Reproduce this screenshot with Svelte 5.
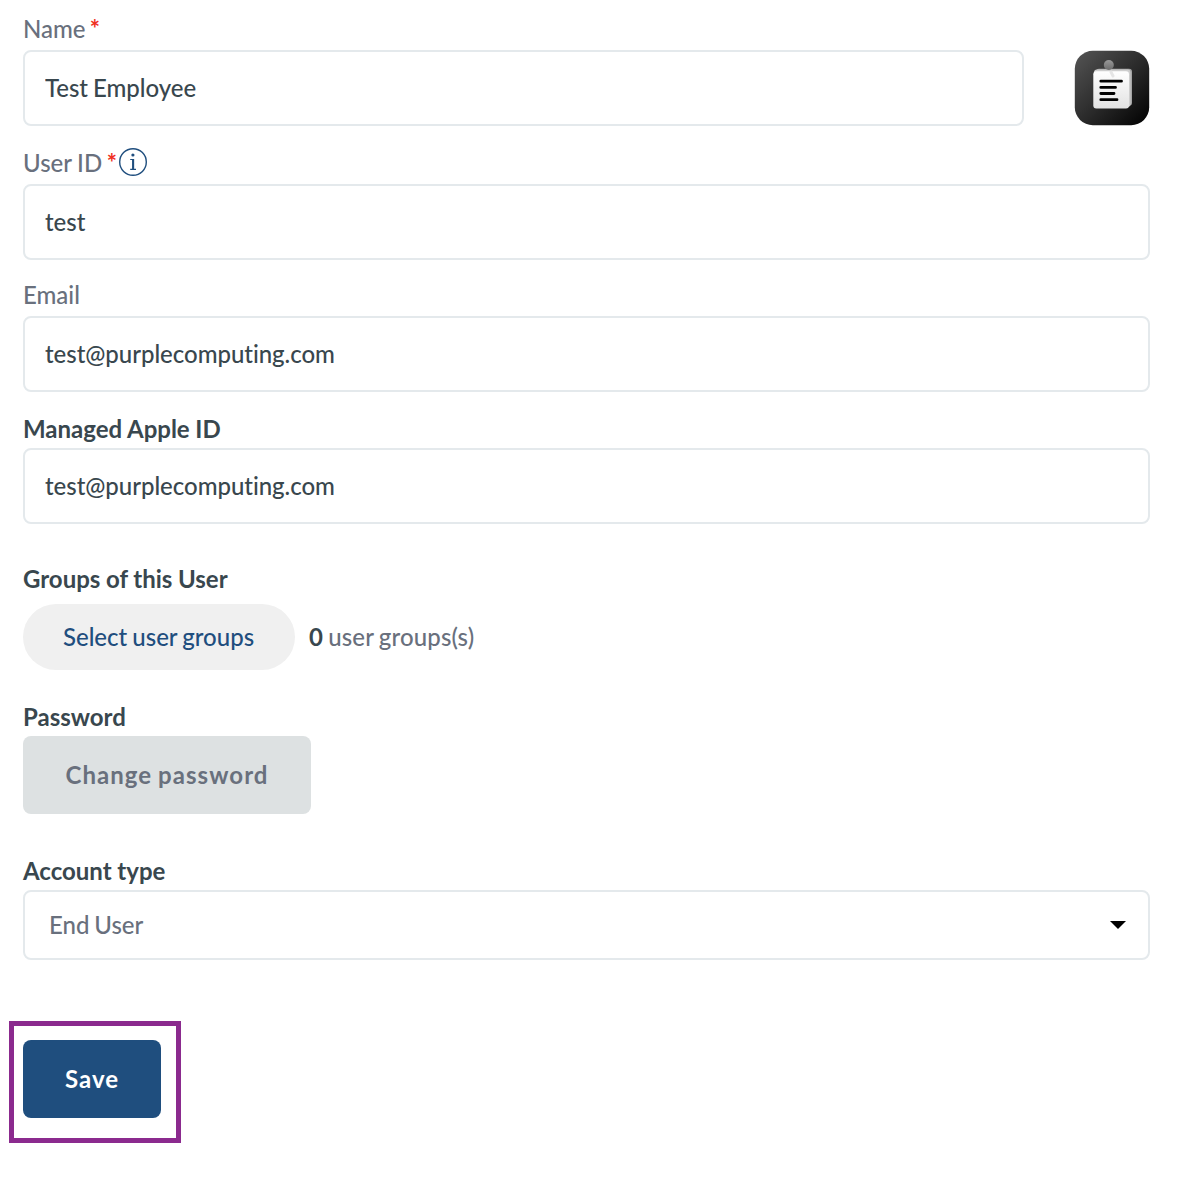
<script lang="ts">
	let name = 'Test Employee';
	let userId = 'test';
	let email = 'test@purplecomputing.com';
	let appleId = 'test@purplecomputing.com';
	let groupCount = 0;
	let accountType = 'End User';
</script>

<svelte:head>
	<title>Edit user</title>
</svelte:head>

<form class="user-form" on:submit|preventDefault>
	<div class="name-row">
		<div class="field">
			<label for="name">Name <span class="required">*</span></label>
			<input id="name" type="text" spellcheck="false" bind:value={name} />
		</div>
		<svg class="app-icon" width="76" height="76" viewBox="0 0 76 76">
			<defs>
				<linearGradient id="tile" x1="0" y1="0" x2="1" y2="1">
					<stop offset="0" stop-color="#555" />
					<stop offset="0.5" stop-color="#2c2c2c" />
					<stop offset="1" stop-color="#000" />
				</linearGradient>
				<linearGradient id="paper" x1="0" y1="0" x2="0" y2="1">
					<stop offset="0" stop-color="#fff" />
					<stop offset="1" stop-color="#e2e2e2" />
				</linearGradient>
				<linearGradient id="pin" x1="0" y1="0" x2="0" y2="1">
					<stop offset="0" stop-color="#999" />
					<stop offset="1" stop-color="#6c6c6c" />
				</linearGradient>
			</defs>
			<rect x="0.8" y="0.8" width="74.4" height="74.4" rx="18" fill="url(#tile)" />
			<rect x="22" y="18.7" width="36" height="37" rx="3" fill="#a5a5a5" />
			<rect x="20" y="19.5" width="36.5" height="37.5" rx="3" fill="#cecece" />
			<rect x="19.3" y="21.2" width="35.7" height="37.3" rx="3" fill="url(#paper)" />
			<path d="M37 22l2 4" stroke="#e5e5e5" stroke-width="3" stroke-linecap="round" />
			<circle cx="34.8" cy="15" r="5" fill="url(#pin)" />
			<path
				d="M26.8 31.2h20.7M26.8 37.4h14.7M26.8 43.5h13.2M26.8 49.7h16.2"
				stroke="#000"
				stroke-width="2.8"
				stroke-linecap="round"
			/>
		</svg>
	</div>

	<div class="field user-id">
		<label for="user-id">
			User ID <span class="required">*</span><svg class="info" width="28" height="28" viewBox="0 0 28 28">
				<circle cx="14" cy="14" r="13.3" fill="none" stroke="#1f4e7e" stroke-width="1.4" />
				<circle cx="13.9" cy="7" r="1.6" fill="#1f4e7e" />
				<path d="M11.2 11.5h3.2M11.2 21.3h5.8" fill="none" stroke="#1f4e7e" stroke-width="1.2" />
				<path d="M14.1 11v10.3" stroke="#1f4e7e" stroke-width="2.1" />
			</svg>
		</label>
		<input id="user-id" type="text" spellcheck="false" bind:value={userId} />
	</div>

	<div class="field email">
		<label for="email">Email</label>
		<input id="email" type="text" spellcheck="false" bind:value={email} />
	</div>

	<div class="field apple-id">
		<label class="strong" for="apple-id">Managed Apple ID</label>
		<input id="apple-id" type="text" spellcheck="false" bind:value={appleId} />
	</div>

	<div class="field groups">
		<div class="strong">Groups of this User</div>
		<div class="group-row">
			<button type="button" class="pill">Select user groups</button>
			<span class="count"><b>{groupCount}</b> user groups(s)</span>
		</div>
	</div>

	<div class="field password">
		<div class="strong">Password</div>
		<button type="button" class="btn">Change password</button>
	</div>

	<div class="field account">
		<div class="strong">Account type</div>
		<button type="button" class="select">
			{accountType}
			<svg class="caret" width="16" height="8" viewBox="0 0 16 8"><path d="M0 0h16L8 8z" /></svg>
		</button>
	</div>

	<div class="save-box">
		<button type="submit" class="btn primary">Save</button>
	</div>
</form>

<style>
	:global(body) {
		background: #fff;
		color: #69707d;
		font-family: Lato, 'Open Sans', sans-serif;
		font-size: 24px;
		font-weight: 500;
		font-variant-ligatures: none;
		word-spacing: -1px;
	}

	.user-form {
		box-sizing: border-box;
		width: 1178px;
		height: 1180px;
		padding: 10px 28px 0 23px;
	}

	.name-row {
		display: flex;
		align-items: flex-end;
		gap: 50px;
	}

	.name-row .field {
		flex: 1;
	}

	.field {
		display: flex;
		flex-direction: column;
		align-items: flex-start;
	}

	label,
	.strong {
		display: flex;
		align-items: center;
		box-sizing: border-box;
		height: 40px;
		padding-bottom: 4px;
		white-space: pre;
	}

	.strong {
		height: 38px;
		padding-bottom: 2px;
		color: #39474e;
		font-weight: 700;
		word-spacing: -0.2px;
	}

	.required {
		margin-left: -1px;
		color: #f0301f;
		font-weight: 700;
	}

	.user-id label {
		word-spacing: -0.5px;
	}

	.info {
		margin-left: 2px;
	}

	input,
	.select {
		box-sizing: border-box;
		width: 100%;
		height: 76px;
		padding: 0 20px 2px;
		border: 2px solid #e4e9ec;
		border-radius: 8px;
		background: #fff;
		color: #39474e;
		font: inherit;
		font-variant-ligatures: none;
		letter-spacing: -0.04px;
		word-spacing: inherit;
		outline: none;
	}

	button {
		font: inherit;
		font-variant-ligatures: none;
		word-spacing: inherit;
		border: none;
		cursor: pointer;
	}

	.user-id {
		margin-top: 18px;
	}

	.email {
		margin-top: 16px;
	}

	.apple-id {
		margin-top: 18px;
	}

	.groups {
		margin-top: 36px;
	}

	.groups .strong {
		height: 44px;
		padding-bottom: 8px;
	}

	.group-row {
		display: flex;
		align-items: center;
		gap: 14px;
	}

	.count {
		padding-bottom: 2px;
		letter-spacing: 0.13px;
	}

	.group-row b {
		color: #39474e;
	}

	.pill {
		width: 272px;
		height: 66px;
		padding: 0 1px 2px 0;
		border-radius: 33px;
		background: #f0f0f0;
		color: #1f4e7e;
	}

	.password {
		margin-top: 28px;
	}

	.btn {
		width: 288px;
		height: 78px;
		padding: 0 0 2px;
		border-radius: 8px;
		background: #dde1e2;
		color: #69707d;
		font-weight: 700;
		letter-spacing: 1.05px;
	}

	.account {
		margin-top: 38px;
	}

	.select {
		display: flex;
		align-items: center;
		justify-content: space-between;
		height: 70px;
		padding: 0 22px 2px 24px;
		border: 2px solid #e4e9ec;
		color: #69707d;
	}

	.caret {
		margin-top: 2px;
	}

	.save-box {
		box-sizing: border-box;
		width: 172px;
		height: 122px;
		margin: 61px 0 0 -14px;
		padding: 14px 9px;
		border: 5px solid #8b2a8e;
	}

	.primary {
		width: 138px;
		background: #1f4e7e;
		color: #fff;
	}
</style>
